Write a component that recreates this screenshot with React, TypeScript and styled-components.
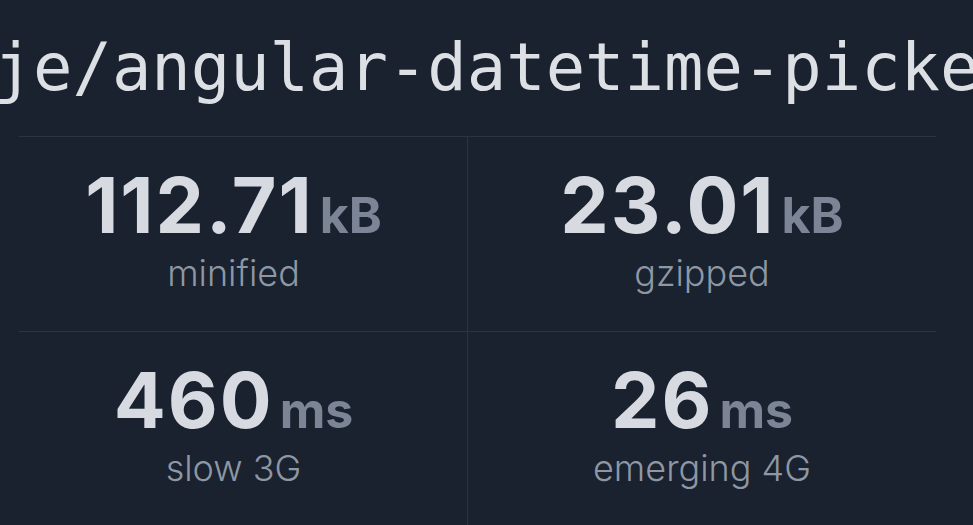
import styled, { createGlobalStyle } from 'styled-components';

const GlobalStyle = createGlobalStyle`
  html, body {
    margin: 0;
    padding: 0;
    background: #19222e;
  }
  body {
    font-family: Inter, 'Noto Sans', sans-serif;
    overflow: hidden;
  }
`;

const Page = styled.div`
  width: 973px;
  height: 525px;
  overflow: hidden;
  background: #19222e;
`;

const PackageName = styled.h1`
  margin: 0;
  padding-top: 29px;
  height: 136px;
  box-sizing: border-box;
  display: flex;
  justify-content: center;
  white-space: nowrap;
  font-family: 'DejaVu Sans Mono', 'Liberation Mono', monospace;
  font-weight: 400;
  font-size: 65.5px;
  line-height: 76px;
  color: #dcdfe4;
`;

const Stats = styled.div`
  width: 936px;
`;

const Row = styled.div`
  display: grid;
  grid-template-columns: 1fr 1fr;
  height: 195px;
  background: linear-gradient(#2b3441, #2b3441) 19px 0 / calc(100% - 19px) 1px no-repeat;
`;

const Cell = styled.div<{ $divider?: boolean }>`
  display: flex;
  flex-direction: column;
  align-items: center;
  padding-top: 30px;
  border-right: ${(p) => (p.$divider ? '1px solid #2b3441' : 'none')};
`;

const Value = styled.div`
  display: flex;
  align-items: baseline;
  font-weight: 700;
  color: #d7dae0;
`;

const Number = styled.span`
  font-size: 77px;
  line-height: 78px;
  letter-spacing: 2px;
`;

const Unit = styled.span`
  margin-left: 6px;
  font-size: 50px;
  color: #7b8596;
`;

const Label = styled.div`
  margin-top: 6px;
  font-size: 36px;
  font-weight: 300;
  line-height: 44px;
  color: #8e97a4;
`;

type Stat = { value: string; unit: string; label: string };

const rows: Stat[][] = [
  [
    { value: '112.71', unit: 'kB', label: 'minified' },
    { value: '23.01', unit: 'kB', label: 'gzipped' },
  ],
  [
    { value: '460', unit: 'ms', label: 'slow 3G' },
    { value: '26', unit: 'ms', label: 'emerging 4G' },
  ],
];

export default function App() {
  return (
    <Page>
      <GlobalStyle />
      <PackageName>@je/angular-datetime-picker</PackageName>
      <Stats>
        {rows.map((row, i) => (
          <Row key={i}>
            {row.map((stat, j) => (
              <Cell key={stat.label} $divider={j === 0}>
                <Value>
                  <Number>{stat.value}</Number>
                  <Unit>{stat.unit}</Unit>
                </Value>
                <Label>{stat.label}</Label>
              </Cell>
            ))}
          </Row>
        ))}
      </Stats>
    </Page>
  );
}
